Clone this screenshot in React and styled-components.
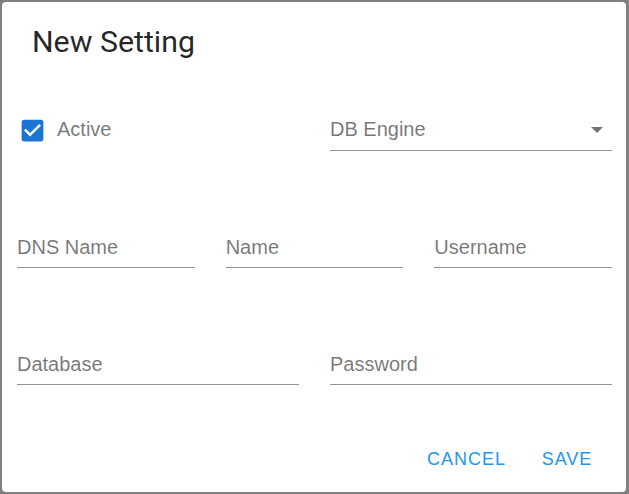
import React from "react";
import styled, { createGlobalStyle } from "styled-components";

const Global = createGlobalStyle`
  html, body { margin: 0; padding: 0; background: #808080; }
  #root { width: 629px; height: 494px; overflow: hidden; }
`;

const Dialog = styled.div`
  margin: 2px 3px 2px 2px;
  height: 490px;
  background: #fff;
  border-radius: 4px;
  display: flex;
  flex-direction: column;
  box-sizing: border-box;
`;

const Title = styled.h2`
  margin: 0;
  padding: 22px 0 0 30px;
  font-family: Roboto, "Liberation Sans", sans-serif;
  font-weight: 400;
  font-size: 30.3px;
  line-height: 36px;
  color: rgba(0, 0, 0, 0.87);
`;

const Form = styled.div`
  padding: 0 14px 0 15px;
  display: flex;
  flex-direction: column;
`;

const Row = styled.div`
  display: grid;
  grid-template-columns: repeat(${(p) => p.$cols}, 1fr);
  column-gap: 31px;
  margin-top: ${(p) => p.$top}px;
`;

const Field = styled.div`
  display: flex;
  align-items: center;
  justify-content: space-between;
  padding-bottom: ${(p) => p.$pb || 8}px;
  border-bottom: 1px solid rgba(0, 0, 0, 0.42);
`;

const Label = styled.span`
  font-family: "Liberation Sans", Arial, sans-serif;
  font-size: 20px;
  line-height: 24px;
  color: rgba(0, 0, 0, 0.54);
  white-space: nowrap;
`;

const CheckRow = styled.label`
  display: flex;
  align-items: center;
  height: 24px;
  padding-left: 1px;
`;

const CheckIcon = styled.svg`
  width: 29px;
  height: 29px;
  margin-right: 10px;
  margin-top: 2px;
  flex: none;
`;

const Arrow = styled.svg`
  width: 12px;
  height: 6px;
  margin-right: 9px;
  margin-top: 1px;
`;

const Actions = styled.div`
  display: flex;
  justify-content: flex-end;
  gap: 13px;
  padding-right: 19px;
  margin-top: 56px;
`;

const Button = styled.button`
  min-width: 80px;
  padding: 6px 8px;
  border: 0;
  background: transparent;
  font-family: "Liberation Sans", Arial, sans-serif;
  font-size: 18px;
  line-height: 24px;
  letter-spacing: 1px;
  color: #2196f3;
  text-transform: uppercase;
  cursor: pointer;
`;

export default function App() {
  return (
    <>
      <Global />
      <Dialog>
        <Title>New Setting</Title>
        <Form>
          <Row $cols={2} $top={57}>
            <CheckRow>
              <CheckIcon viewBox="0 0 24 24">
                <path
                  fill="#1976d2"
                  d="M19 3H5c-1.11 0-2 .9-2 2v14c0 1.1.89 2 2 2h14c1.11 0 2-.9 2-2V5c0-1.1-.89-2-2-2zm-9 14l-5-5 1.41-1.41L10 14.17l7.59-7.59L19 8l-9 9z"
                />
              </CheckIcon>
              <Label>Active</Label>
            </CheckRow>
            <Field $pb={9}>
              <Label>DB Engine</Label>
              <Arrow viewBox="0 0 12 6">
                <polygon points="0,0 12,0 6,6" fill="rgba(0,0,0,0.54)" />
              </Arrow>
            </Field>
          </Row>
          <Row $cols={3} $top={84}>
            <Field>
              <Label>DNS Name</Label>
            </Field>
            <Field>
              <Label>Name</Label>
            </Field>
            <Field>
              <Label>Username</Label>
            </Field>
          </Row>
          <Row $cols={2} $top={84}>
            <Field>
              <Label>Database</Label>
            </Field>
            <Field>
              <Label>Password</Label>
            </Field>
          </Row>
        </Form>
        <Actions>
          <Button>Cancel</Button>
          <Button>Save</Button>
        </Actions>
      </Dialog>
    </>
  );
}
